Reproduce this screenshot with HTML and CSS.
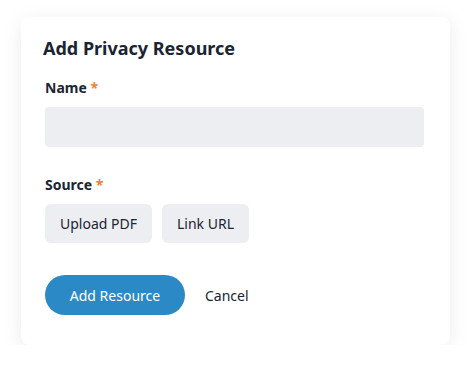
FILE: index.html
```html
<!DOCTYPE html>
<html>
<head>
<meta charset="utf-8">
<link rel="stylesheet" href="styles.css">
</head>
<body>
<div class="page">
  <div class="card">
    <h1 class="title">Add Privacy Resource</h1>
    <div class="field">
      <label class="label">Name <span class="req">*</span></label>
      <div class="input"></div>
    </div>
    <div class="field field-source">
      <label class="label">Source <span class="req">*</span></label>
      <div class="options">
        <button class="opt">Upload PDF</button>
        <button class="opt">Link URL</button>
      </div>
    </div>
    <div class="actions">
      <button class="primary">Add Resource</button>
      <button class="link">Cancel</button>
    </div>
  </div>
</div>
</body>
</html>
```

FILE: styles.css
```css
html, body {
  margin: 0;
  padding: 0;
  background: #ffffff;
}
body {
  font-family: "Noto Sans", Lato, sans-serif;
  color: #1b2433;
}
.page {
  padding: 17px 21px 0 21px;
}
.card {
  width: 429px;
  box-sizing: border-box;
  background: #fff;
  border-radius: 8px;
  box-shadow: 0 4px 20px rgba(0, 0, 0, 0.08);
  padding: 19px 26px 30px 24px;
}
.title {
  margin: 0 0 0 -2px;
  font-size: 18px;
  line-height: 24px;
  font-weight: 700;
  color: #1b2433;
}
.field {
  margin-top: 18px;
}
.field-source {
  margin-top: 28px;
}
.label {
  display: block;
  font-size: 14px;
  line-height: 20px;
  font-weight: 700;
  color: #1b2433;
  margin-bottom: 9px;
}
.req {
  color: #e8843c;
}
.input {
  height: 40px;
  background: #edeef2;
  border-radius: 4px;
}
.options {
  display: flex;
  gap: 10px;
}
.opt {
  font-family: inherit;
  font-size: 14px;
  color: #1b2433;
  height: 39px;
  padding: 0 15px;
  border: none;
  border-radius: 6px;
  background: #edeef2;
}
.opt-wide {
  padding: 0 16px;
}
.actions {
  margin-top: 32px;
  display: flex;
  align-items: center;
  gap: 20px;
}
.primary {
  font-family: inherit;
  font-size: 14px;
  color: #fff;
  background: #2b8ac6;
  border: none;
  height: 40px;
  width: 140px;
  border-radius: 20px;
}
.link {
  font-family: inherit;
  font-size: 14px;
  color: #1b2433;
  background: none;
  border: none;
  padding: 0;
}
```
